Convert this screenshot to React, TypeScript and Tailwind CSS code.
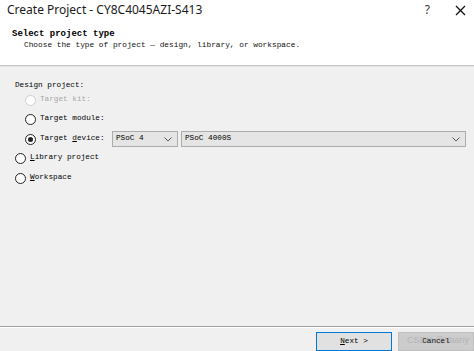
import React from "react";

const mono = { fontFamily: '"Liberation Mono", "DejaVu Sans Mono", monospace' };

function Radio({ checked, disabled }: { checked?: boolean; disabled?: boolean }) {
  return (
    <span
      className={`flex h-[11px] w-[11px] items-center justify-center rounded-full border bg-white ${
        disabled ? "border-[#cfcfcf]" : "border-[#222]"
      }`}
    >
      {checked && <span className="h-[5px] w-[5px] rounded-full bg-[#222]" />}
    </span>
  );
}

function Chevron() {
  return (
    <svg width="8" height="5" viewBox="0 0 8 5" className="shrink-0">
      <path d="M0.5 0.5 L4 4 L7.5 0.5" fill="none" stroke="#555" strokeWidth="1" />
    </svg>
  );
}

function Select({ value, className }: { value: string; className: string }) {
  return (
    <div
      className={`flex h-[16px] items-center justify-between border border-[#acacac] bg-[#e5e5e5] pl-[3px] pr-[5px] text-[7.7px] text-black ${className}`}
    >
      <span>{value}</span>
      <Chevron />
    </div>
  );
}

function CloseIcon() {
  return (
    <svg width="11" height="11" viewBox="0 0 11 11" className="block shrink-0">
      <path d="M1 1 L10 10 M10 1 L1 10" stroke="#111" strokeWidth="1.3" fill="none" />
    </svg>
  );
}

export default function App() {
  return (
    <div className="relative flex h-[351px] w-[474px] flex-col overflow-hidden bg-[#f0f0f0]" style={mono}>
      <div
        className="flex h-[20px] items-center gap-[25px] bg-white pl-[7px] pr-[8px]"
        style={{ fontFamily: '"Noto Sans", "DejaVu Sans", sans-serif' }}
      >
        <span className="flex-1 text-[12px] text-[#1a1a1a]">Create Project - CY8C4045AZI-S413</span>
        <span className="text-[12px] text-[#333]">?</span>
        <CloseIcon />
      </div>

      <div className="flex h-[45px] flex-col bg-white pl-[12px] pt-[8px]">
        <span className="text-[9px] font-bold leading-[12px] text-black">Select project type</span>
        <span className="pl-[12px] text-[7.8px] leading-[11px] text-[#111]">
          Choose the type of project — design, library, or workspace.
        </span>
      </div>
      <div className="h-px bg-[#c8c8c8]" />
      <div className="h-px bg-[#e3e3e3]" />

      <div className="flex flex-1 flex-col pl-[15px] pr-[8px] pt-[13px] text-[7.7px] text-black">
        <span className="leading-[10px]">Design project:</span>
        <div className="flex flex-col pl-[10px]">
          <div className="mt-[2px] flex h-[16px] items-center gap-[4px] text-[#a8a8a8]">
            <Radio disabled />
            <span>Target kit:</span>
          </div>
          <div className="mt-[3px] flex h-[16px] items-center gap-[4px]">
            <Radio />
            <span>Target module:</span>
          </div>
          <div className="mt-[4px] flex h-[16px] items-center">
            <Radio checked />
            <span className="ml-[4px] w-[72px]">
              Target <span className="underline">d</span>evice:
            </span>
            <Select value="PSoC 4" className="w-[66px]" />
            <Select value="PSoC 4000S" className="ml-[3px] flex-1" />
          </div>
        </div>
        <div className="mt-[3px] flex h-[16px] items-center gap-[4px]">
          <Radio />
          <span>
            <span className="underline">L</span>ibrary project
          </span>
        </div>
        <div className="mt-[4px] flex h-[16px] items-center gap-[4px]">
          <Radio />
          <span>
            <span className="underline">W</span>orkspace
          </span>
        </div>
      </div>

      <div className="h-px bg-[#a0a0a0]" />
      <div className="h-px bg-white" />
      <div className="flex h-[23px] items-start justify-end gap-[6px] pt-[4px]">
        <div className="flex h-[19px] w-[76px] items-center justify-center border border-[#0078d7] bg-[#e1e1e1] text-[7.7px] text-black">
          <span>
            <span className="underline">N</span>ext &gt;
          </span>
        </div>
        <div className="relative flex h-[19px] w-[76px] items-center justify-center border border-[#bfbfbf] bg-[#cccccc] text-[7.7px] text-[#111]">
          <span
            className="absolute left-[8px] top-[1px] text-[9px] text-[#b4b4b4]"
            style={{ fontFamily: '"Liberation Sans", sans-serif' }}
          >
            CSDN @Vaany
          </span>
          <span className="relative">Cancel</span>
        </div>
      </div>
    </div>
  );
}
